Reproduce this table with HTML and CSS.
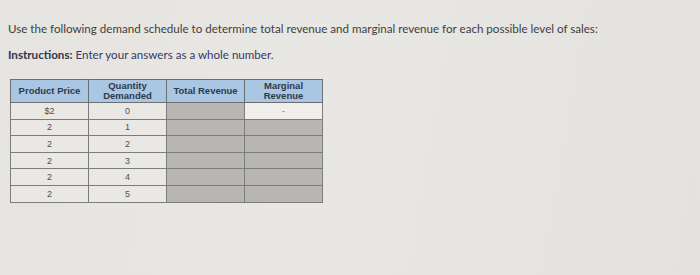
FILE: index.html
```html
<!DOCTYPE html>
<html>
<head>
<meta charset="utf-8">
<link rel="stylesheet" href="styles.css">
</head>
<body>
<div class="page">
  <p class="q">Use the following demand schedule to determine total revenue and marginal revenue for each possible level of sales:</p>
  <p class="ins"><b>Instructions:</b> Enter your answers as a whole number.</p>
  <table class="tbl">
    <thead>
      <tr>
        <th>Product Price</th>
        <th>Quantity<br>Demanded</th>
        <th>Total Revenue</th>
        <th>Marginal<br>Revenue</th>
      </tr>
    </thead>
    <tbody>
      <tr><td>$2</td><td>0</td><td class="in"></td><td class="blank">-</td></tr>
      <tr><td>2</td><td>1</td><td class="in"></td><td class="in"></td></tr>
      <tr><td>2</td><td>2</td><td class="in"></td><td class="in"></td></tr>
      <tr><td>2</td><td>3</td><td class="in"></td><td class="in"></td></tr>
      <tr><td>2</td><td>4</td><td class="in"></td><td class="in"></td></tr>
      <tr><td>2</td><td>5</td><td class="in"></td><td class="in"></td></tr>
    </tbody>
  </table>
</div>
</body>
</html>
```
FILE: styles.css
```css
html, body {
  margin: 0;
  padding: 0;
}
body {
  width: 700px;
  height: 275px;
  background: linear-gradient(100deg, #e6e4e0 0%, #e9e7e3 45%, #e4e2de 100%);
  font-family: Lato, "Open Sans", sans-serif;
  overflow: hidden;
}
.page {
  padding: 22px 0 0 8px;
}
.q {
  margin: 0;
  font-size: 11.6px;
  line-height: 14px;
  color: #3e3e3e;
}
.ins {
  margin: 12px 0 0 0;
  font-size: 11.6px;
  line-height: 14px;
  color: #3a3766;
}
.ins b {
  color: #33334a;
  font-weight: 700;
}
.tbl {
  margin: 17px 0 0 2px;
  border-collapse: collapse;
  font-family: "Liberation Sans", Arial, sans-serif;
  border: 1px solid #6e6e6e;
}
.tbl th {
  background: #a9c6e2;
  color: #2e3a4c;
  font-size: 9.5px;
  font-weight: 700;
  line-height: 10px;
  height: 22px;
  padding: 0;
  border: 1px solid #6e6e6e;
  width: 77px;
  text-align: center;
}
.tbl td {
  height: 15.6px;
  padding: 0;
  border: 1px solid #7c7c7c;
  text-align: center;
  font-size: 9px;
  color: #505050;
  background: #eae8e4;
}
.tbl td.in {
  background: #b7b6b3;
}
.tbl td.blank {
  background: #efeeeb;
  color: #777;
}
```
